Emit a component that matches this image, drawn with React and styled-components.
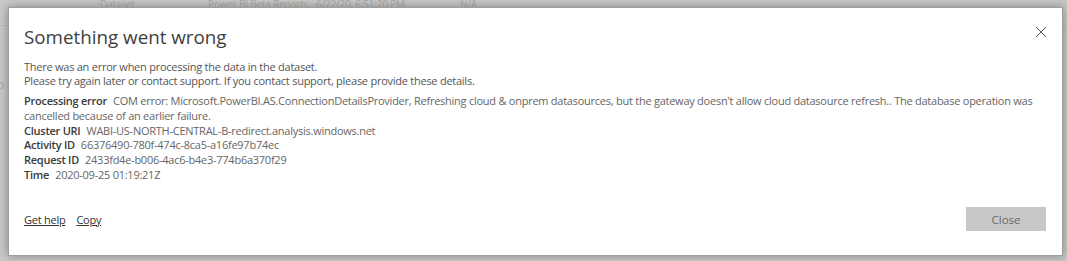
import React from "react";
import styled, { createGlobalStyle } from "styled-components";

const GlobalStyle = createGlobalStyle`
  html, body {
    margin: 0;
    padding: 0;
    background: #c8c8c8;
    font-family: "Open Sans", "Liberation Sans", sans-serif;
    overflow: hidden;
  }
`;

const Page = styled.div`
  position: relative;
  width: 1067px;
  height: 261px;
  overflow: hidden;
  background: #c8c8c8;
`;

const BackRow = styled.div`
  position: absolute;
  top: -3px;
  left: 0;
  font-size: 10px;
  letter-spacing: -0.2px;
  color: #a9a9a9;
  span {
    position: absolute;
    white-space: nowrap;
  }
`;

const BackLine = styled.div`
  position: absolute;
  top: 25px;
  left: 0;
  right: 0;
  height: 1px;
  background: #bdbdbd;
`;

const BackLetter = styled.div`
  position: absolute;
  top: 76px;
  left: -3px;
  font-size: 12px;
  color: #a9a9a9;
`;

const Modal = styled.div`
  position: relative;
  margin: 7px 0 0 8px;
  width: 1055px;
  height: 249px;
  box-sizing: border-box;
  background: #fff;
  border: 1px solid #9e9e9e;
  box-shadow: 0 0 9px rgba(0, 0, 0, 0.35);
  padding: 16px 15px 0 15px;
  display: flex;
  flex-direction: column;
`;

const Header = styled.div`
  display: flex;
  justify-content: space-between;
  align-items: flex-start;
`;

const Title = styled.h1`
  margin: 0;
  font-size: 18.8px;
  font-weight: 400;
  color: #404040;
  line-height: 26px;
`;

const CloseIcon = styled.button`
  border: none;
  background: none;
  padding: 0;
  margin: 2px 0 0 0;
  width: 12px;
  height: 12px;
  display: flex;
  svg {
    display: block;
  }
`;

const Body = styled.div`
  margin-top: 10px;
  font-size: 11px;
  letter-spacing: -0.25px;
  color: #555;
  line-height: 14px;
`;

const Intro = styled.p`
  margin: 0 0 6px 0;
`;

const Details = styled.div`
  line-height: 14.8px;
  padding-right: 8px;
`;

const Detail = styled.div``;

const Label = styled.span`
  font-weight: 600;
  color: #3a3a3a;
  margin-right: 6px;
`;

const Value = styled.span`
  color: #666;
`;

const Footer = styled.div`
  margin-top: auto;
  margin-bottom: 24px;
  display: flex;
  align-items: center;
  justify-content: space-between;
`;

const Links = styled.div`
  display: flex;
  gap: 11px;
`;

const FooterLink = styled.a`
  font-size: 11px;
  letter-spacing: -0.25px;
  color: #333;
  text-decoration: underline;
  cursor: pointer;
`;

const CloseButton = styled.button`
  width: 80px;
  height: 24px;
  border: none;
  background: #c8c8c8;
  color: #6a6a6a;
  font-family: inherit;
  font-size: 11.5px;
  margin-right: 1px;
`;

const details = [
  {
    label: "Processing error",
    value:
      "COM error: Microsoft.PowerBI.AS.ConnectionDetailsProvider, Refreshing cloud & onprem datasources, but the gateway doesn't allow cloud datasource refresh.. The database operation was cancelled because of an earlier failure.",
  },
  { label: "Cluster URI", value: "WABI-US-NORTH-CENTRAL-B-redirect.analysis.windows.net" },
  { label: "Activity ID", value: "66376490-780f-474c-8ca5-a16fe97b74ec" },
  { label: "Request ID", value: "2433fd4e-b006-4ac6-b4e3-774b6a370f29" },
  { label: "Time", value: "2020-09-25 01:19:21Z" },
];

export default function App() {
  return (
    <Page>
      <GlobalStyle />
      <BackRow>
        <span style={{ left: 100 }}>Dataset</span>
        <span style={{ left: 208 }}>Power BI Beta Reports</span>
        <span style={{ left: 316 }}>6/22/20, 6:51:20 PM</span>
        <span style={{ left: 460 }}>N/A</span>
      </BackRow>
      <BackLine />
      <BackLetter>p</BackLetter>
      <Modal>
        <Header>
          <Title>Something went wrong</Title>
          <CloseIcon aria-label="Close">
            <svg width="12" height="12" viewBox="0 0 12 12">
              <path d="M1 1 L11 11 M11 1 L1 11" stroke="#555" strokeWidth="1" fill="none" />
            </svg>
          </CloseIcon>
        </Header>
        <Body>
          <Intro>
            There was an error when processing the data in the dataset.
            <br />
            Please try again later or contact support. If you contact support, please provide these details.
          </Intro>
          <Details>
            {details.map((d) => (
              <Detail key={d.label}>
                <Label>{d.label}</Label>
                <Value>{d.value}</Value>
              </Detail>
            ))}
          </Details>
        </Body>
        <Footer>
          <Links>
            <FooterLink>Get help</FooterLink>
            <FooterLink>Copy</FooterLink>
          </Links>
          <CloseButton>Close</CloseButton>
        </Footer>
      </Modal>
    </Page>
  );
}
